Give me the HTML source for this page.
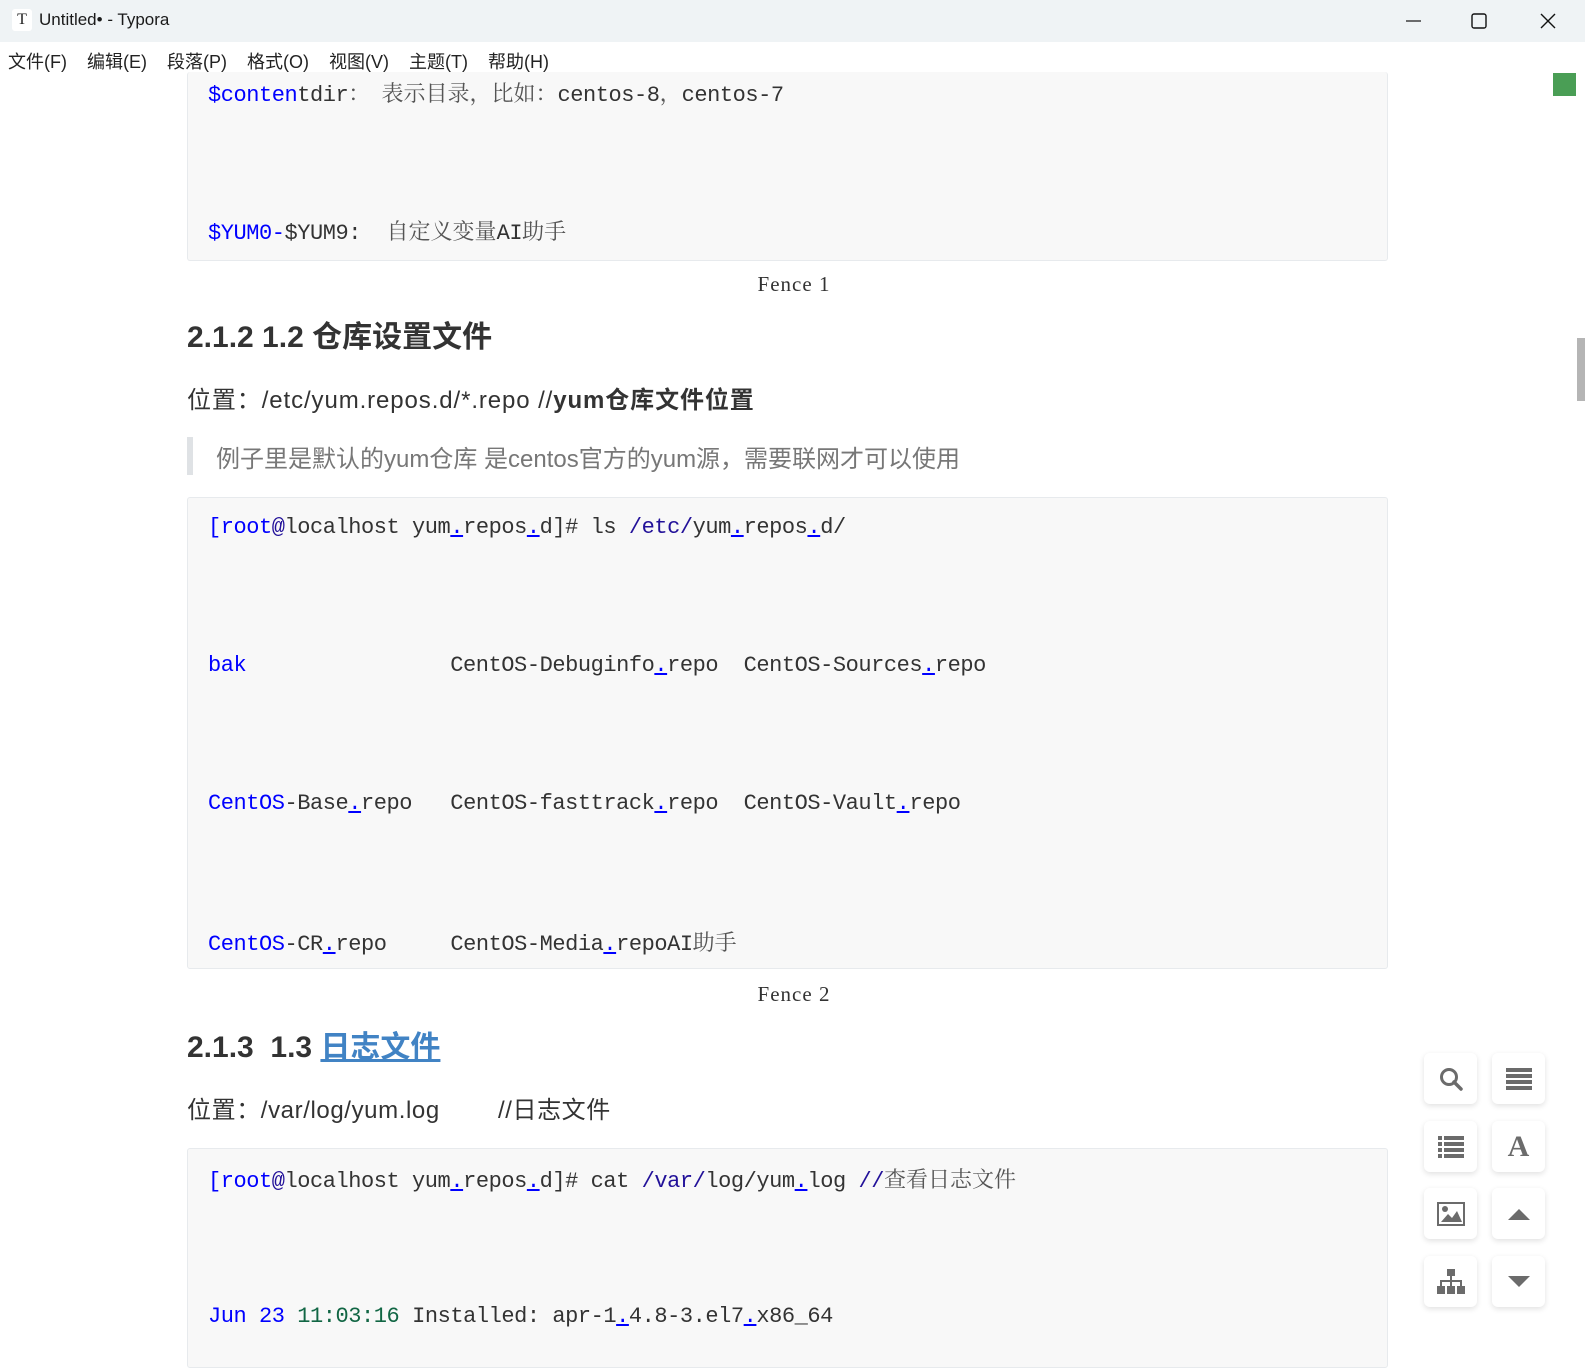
<!DOCTYPE html>
<html><head><meta charset="utf-8"><style>
*{margin:0;padding:0;box-sizing:border-box}
body{width:1585px;height:1343px;overflow:hidden;background:#fff;position:relative;font-family:"Liberation Sans","Noto Sans CJK SC",sans-serif;color:#333}
.abs{position:absolute;white-space:pre}
.title{position:absolute;left:0;top:0;width:1585px;height:42px;background:#eff3f5}
.menu{position:absolute;left:0;top:42px;width:1585px;height:31px;background:#fff}
.code{position:absolute;left:187px;width:1201px;background:#f8f8f8;border:1px solid #e7eaed;border-radius:3px}
.cl{position:absolute;left:208px;font-family:"Liberation Mono","Noto Sans CJK SC",monospace;font-size:22px;letter-spacing:-0.45px;color:#333;white-space:pre;line-height:26px}
.b{color:#0000ff}.p{color:#221199}
.u{color:#0000ff;text-decoration:underline;text-decoration-color:#0000ff}
.cj{font-family:"Noto Serif CJK SC",serif;color:#555;letter-spacing:0}
.fence{position:absolute;left:0;width:1588px;text-align:center;font-family:"Liberation Serif",serif;font-size:21px;color:#333;letter-spacing:1px}
h3{position:absolute;left:187px;font-size:30px;font-weight:bold;color:#333;white-space:pre}
.para{position:absolute;left:187px;font-size:24px;color:#333;white-space:pre}
.btn{position:absolute;width:53px;height:51px;background:#fff;border-radius:6px;box-shadow:0 2px 6px rgba(0,0,0,.12);display:flex;align-items:center;justify-content:center}
</style></head><body>
<div class="title"></div>
<div class="abs" style="left:12px;top:9px;width:20px;height:22px;background:#fff;border-radius:3px;font-family:'Liberation Serif',serif;font-size:16px;text-align:center;line-height:22px;color:#222">T</div>
<div class="abs" style="left:39px;top:10px;font-size:17px;color:#1a1a1a">Untitled• - Typora</div>
<svg class="abs" style="left:1405px;top:10px" width="170" height="22"><line x1="1" y1="11" x2="16" y2="11" stroke="#111" stroke-width="1.2"/><rect x="67" y="4" width="14" height="14" rx="2" fill="none" stroke="#111" stroke-width="1.4"/><path d="M136 4 L150 18 M150 4 L136 18" stroke="#111" stroke-width="1.4"/></svg>
<div class="menu"></div>
<div class="abs" style="left:8px;top:48px;font-size:18px;color:#222;word-spacing:0">文件(F)&nbsp;&nbsp;&nbsp;&nbsp;编辑(E)&nbsp;&nbsp;&nbsp;&nbsp;段落(P)&nbsp;&nbsp;&nbsp;&nbsp;格式(O)&nbsp;&nbsp;&nbsp;&nbsp;视图(V)&nbsp;&nbsp;&nbsp;&nbsp;主题(T)&nbsp;&nbsp;&nbsp;&nbsp;帮助(H)</div>
<div class="abs" style="left:1553px;top:73px;width:23px;height:23px;background:#4a9e55"></div>
<div class="abs" style="left:1577px;top:338px;width:8px;height:63px;background:#b5b5b5"></div>

<div class="code" style="top:72px;height:189px;border-top:none"></div>
<div class="cl" style="top:80px"><span class="b">$conten</span>tdir<span class="cj">：  表示目录，比如：</span>centos-8<span class="cj">，</span>centos-7</div>
<div class="cl" style="top:218px"><span class="b">$YUM0-</span>$YUM9:  <span class="cj">自定义变量</span>AI<span class="cj">助手</span></div>
<div class="fence" style="top:272px">Fence 1</div>

<h3 style="top:312px">2.1.2 1.2 仓库设置文件</h3>
<div class="para" style="top:380px;letter-spacing:0.9px">位置：/etc/yum.repos.d/*.repo //<b>yum仓库文件位置</b></div>
<div class="abs" style="left:187px;top:437px;width:6px;height:38px;background:#dfe2e5"></div>
<div class="para" style="left:216px;top:439px;color:#777">例子里是默认的yum仓库 是centos官方的yum源，需要联网才可以使用</div>

<div class="code" style="top:497px;height:472px"></div>
<div class="cl" style="top:515px"><span class="b">[root</span><span class="p">@</span>localhost yum<span class="u">.</span>repos<span class="u">.</span>d]# ls <span class="p">/etc/</span>yum<span class="u">.</span>repos<span class="u">.</span>d/</div>
<div class="cl" style="top:653px"><span class="b">bak</span>                CentOS-Debuginfo<span class="u">.</span>repo  CentOS-Sources<span class="u">.</span>repo</div>
<div class="cl" style="top:791px"><span class="b">CentOS</span>-Base<span class="u">.</span>repo   CentOS-fasttrack<span class="u">.</span>repo  CentOS-Vault<span class="u">.</span>repo</div>
<div class="cl" style="top:929px"><span class="b">CentOS</span>-CR<span class="u">.</span>repo     CentOS-Media<span class="u">.</span>repoAI<span class="cj">助手</span></div>
<div class="fence" style="top:982px">Fence 2</div>

<h3 style="top:1022px">2.1.3  1.3 <span style="color:#4183c4;text-decoration:underline">日志文件</span></h3>
<div class="para" style="top:1090px;letter-spacing:0.6px">位置：/var/log/yum.log        //日志文件</div>

<div class="code" style="top:1148px;height:220px"></div>
<div class="cl" style="top:1166px"><span class="b">[root</span><span class="p">@</span>localhost yum<span class="u">.</span>repos<span class="u">.</span>d]# cat <span class="p">/var/</span>log/yum<span class="u">.</span>log <span class="p">//</span><span class="cj">查看日志文件</span></div>
<div class="cl" style="top:1304px"><span class="b">Jun 23</span> <span style="color:#164">11:03:16</span> Installed: apr-1<span class="u">.</span>4.8-3.el7<span class="u">.</span>x86_64</div>

<div class="btn" style="left:1424px;top:1053px"><svg width="26" height="26"><circle cx="11" cy="11" r="7.5" fill="none" stroke="#6b6b6b" stroke-width="3"/><line x1="16" y1="16" x2="23" y2="23" stroke="#6b6b6b" stroke-width="3.5" stroke-linecap="round"/></svg></div>
<div class="btn" style="left:1492px;top:1053px"><svg width="26" height="22"><g fill="#6b6b6b"><rect y="0" width="26" height="4"/><rect y="6" width="26" height="4"/><rect y="12" width="26" height="4"/><rect y="18" width="26" height="4"/></g></svg></div>
<div class="btn" style="left:1424px;top:1121px"><svg width="26" height="22"><g fill="#6b6b6b"><rect y="0" width="4" height="4"/><rect x="6" y="0" width="20" height="4"/><rect y="6" width="4" height="4"/><rect x="6" y="6" width="20" height="4"/><rect y="12" width="4" height="4"/><rect x="6" y="12" width="20" height="4"/><rect y="18" width="4" height="4"/><rect x="6" y="18" width="20" height="4"/></g></svg></div>
<div class="btn" style="left:1492px;top:1121px;font-family:'Liberation Serif',serif;font-size:30px;font-weight:bold;color:#6b6b6b">A</div>
<div class="btn" style="left:1424px;top:1188px"><svg width="28" height="24"><rect x="1" y="1" width="26" height="22" fill="none" stroke="#6b6b6b" stroke-width="2"/><circle cx="8" cy="7" r="3" fill="#6b6b6b"/><path d="M4 20 L11 12 L15 16 L20 9 L25 20 Z" fill="#6b6b6b"/></svg></div>
<div class="btn" style="left:1492px;top:1188px"><svg width="22" height="12"><path d="M0 12 L11 1 L22 12 Z" fill="#6b6b6b"/></svg></div>
<div class="btn" style="left:1424px;top:1256px"><svg width="28" height="26"><g fill="#6b6b6b"><rect x="10" y="0" width="8" height="7"/><rect x="13" y="7" width="2" height="5"/><rect x="3" y="11" width="22" height="2"/><rect x="3" y="11" width="2" height="6"/><rect x="23" y="11" width="2" height="6"/><rect x="13" y="11" width="2" height="6"/><rect x="0" y="17" width="8" height="8"/><rect x="10" y="17" width="8" height="8"/><rect x="20" y="17" width="8" height="8"/></g></svg></div>
<div class="btn" style="left:1492px;top:1256px"><svg width="22" height="12"><path d="M0 0 L11 11 L22 0 Z" fill="#6b6b6b"/></svg></div>
</body></html>
